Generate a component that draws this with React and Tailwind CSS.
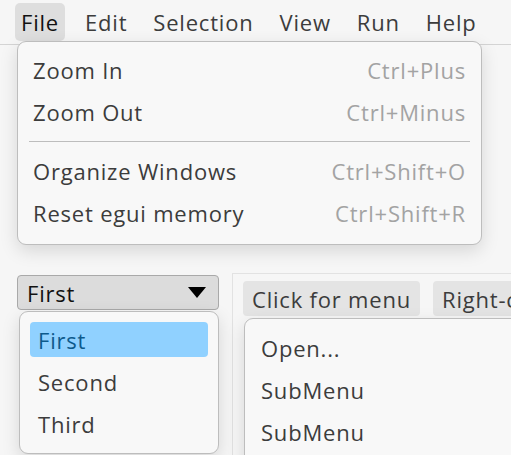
import React from "react";

const menus = ["File", "Edit", "Selection", "View", "Run", "Help"];

const fileItems = [
  { label: "Zoom In", keys: "Ctrl+Plus" },
  { label: "Zoom Out", keys: "Ctrl+Minus" },
  null,
  { label: "Organize Windows", keys: "Ctrl+Shift+O" },
  { label: "Reset egui memory", keys: "Ctrl+Shift+R" },
];

function MenuBar() {
  return (
    <div className="h-[45px] border-b border-[#d4d4d4] flex items-start gap-[14px] pl-[15px] pt-[3px]">
      {menus.map((m) => (
        <div
          key={m}
          className={`h-[38px] px-[6px] flex items-center rounded-[5px] ${
            m === "File" ? "bg-[#dedede] text-[#111]" : "text-[#3c3c3c]"
          }`}
        >
          {m}
        </div>
      ))}
    </div>
  );
}

function FileMenu() {
  return (
    <div className="absolute left-[17px] top-[41px] w-[465px] h-[204px] bg-[#f8f8f8] border border-[#bdbdbd] rounded-[9px] shadow-[0_6px_18px_rgba(0,0,0,0.13)] py-[7px]">
      {fileItems.map((it, i) =>
        it ? (
          <div key={i} className="h-[42px] flex items-center justify-between px-[15px]">
            <span className="text-[#3c3c3c]">{it.label}</span>
            <span className="text-[#a3a3a3]">{it.keys}</span>
          </div>
        ) : (
          <div key={i} className="h-[17px] flex items-center px-[11px]">
            <div className="h-px w-full bg-[#bdbdbd]" />
          </div>
        )
      )}
    </div>
  );
}

function ComboPopup() {
  const opts = ["First", "Second", "Third"];
  return (
    <div className="absolute left-[19px] top-[311px] w-[200px] h-[143px] bg-[#f8f8f8] border border-[#bdbdbd] rounded-[9px] shadow-[0_6px_18px_rgba(0,0,0,0.13)] px-[10px] pt-[10px]">
      {opts.map((o) => (
        <div
          key={o}
          className={`h-[35px] mb-[7px] flex items-center px-[8px] rounded-[4px] ${
            o === "First" ? "bg-[#90d1ff] text-[#0d5a8c]" : "text-[#3c3c3c]"
          }`}
        >
          {o}
        </div>
      ))}
    </div>
  );
}

function ContextPopup() {
  const items = ["Open...", "SubMenu", "SubMenu"];
  return (
    <div className="absolute left-[244px] top-[318px] w-[300px] h-[160px] bg-[#f8f8f8] border border-[#bdbdbd] rounded-[9px] shadow-[0_6px_18px_rgba(0,0,0,0.13)] pt-[8px] pl-[16px]">
      {items.map((t, i) => (
        <div key={i} className="h-[42px] flex items-center text-[#3c3c3c]">
          {t}
        </div>
      ))}
    </div>
  );
}

export default function App() {
  return (
    <div
      className="relative w-[511px] h-[455px] overflow-hidden bg-[#f6f6f6] text-[22px] tracking-[0.8px] leading-none whitespace-nowrap"
      style={{ fontFamily: '"Open Sans", "Noto Sans", sans-serif' }}
    >
      <MenuBar />
      <div className="flex">
        <div className="w-[232px] shrink-0 pl-[17px] pt-[230px]">
          <div className="w-[202px] h-[35px] bg-[#dcdcdc] border border-[#a9a9a9] rounded-[4px] flex items-center justify-between pl-[9px] pr-[12px] text-[#111]">
            <span>First</span>
            <svg width="18" height="11" viewBox="0 0 18 11">
              <path d="M0 0 L18 0 L9 11 Z" fill="#000" />
            </svg>
          </div>
        </div>
        <div className="flex-1 mt-[228px] border-t border-l border-[#e2e2e2] h-[200px] pt-[7px] pl-[10px] flex gap-[13px] overflow-hidden">
          <div className="h-[35px] px-[9px] bg-[#e4e4e4] rounded-[4px] flex items-center text-[#3c3c3c] shrink-0">
            Click for menu
          </div>
          <div className="h-[35px] px-[9px] bg-[#e4e4e4] rounded-[4px] flex items-center text-[#3c3c3c] shrink-0">
            Right-click me
          </div>
        </div>
      </div>
      <FileMenu />
      <ComboPopup />
      <ContextPopup />
    </div>
  );
}
